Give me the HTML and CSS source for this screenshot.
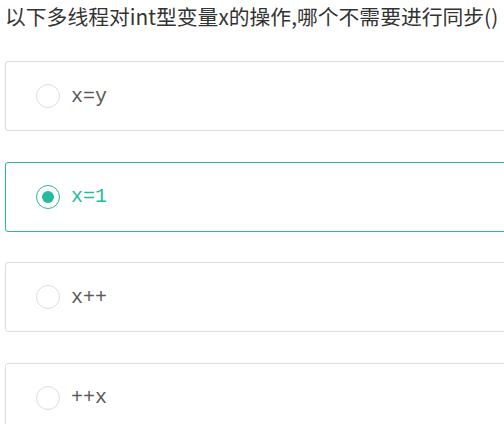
FILE: index.html
```html
<!DOCTYPE html>
<html lang="zh-CN">
<head>
<meta charset="utf-8">
<title>题目</title>
<link rel="stylesheet" href="styles.css">
</head>
<body>
<div class="question">
  <h1 class="title">以下多线程对int型变量x的操作,哪个不需要进行同步()</h1>
  <ul class="options">
    <li class="option"><span class="radio"></span><span class="label">x=y</span></li>
    <li class="option checked"><span class="radio"></span><span class="label">x=1</span></li>
    <li class="option"><span class="radio"></span><span class="label">x++</span></li>
    <li class="option"><span class="radio"></span><span class="label">++x</span></li>
  </ul>
</div>
</body>
</html>
```
FILE: styles.css
```css
html, body {
  margin: 0;
  padding: 0;
  background: #fff;
  overflow: hidden;
}
.question {
  padding-left: 5px;
  width: 560px;
}
.title {
  margin: 0;
  padding-top: 1px;
  font-family: "Noto Sans CJK SC", "Liberation Sans", sans-serif;
  font-weight: normal;
  font-size: 20.8px;
  line-height: 30px;
  color: #333;
  white-space: nowrap;
}
.options {
  list-style: none;
  margin: 30px 0 0;
  padding: 0;
  display: flex;
  flex-direction: column;
  gap: 30.5px;
}
.option {
  box-sizing: border-box;
  height: 70px;
  border: 1px solid #dcdcdc;
  border-radius: 3px;
  padding-left: 30px;
  display: flex;
  align-items: center;
  gap: 11px;
}
.radio {
  box-sizing: border-box;
  width: 24px;
  height: 24px;
  border: 1px solid #dddddd;
  border-radius: 50%;
  display: flex;
  align-items: center;
  justify-content: center;
}
.label {
  font-family: "Courier New", "Liberation Mono", monospace;
  font-size: 20px;
  color: #5a5a5a;
}
.option.checked {
  border-color: #25bb9b;
}
.option.checked .radio {
  border-color: #25bb9b;
}
.option.checked .radio::after {
  content: "";
  width: 12px;
  height: 12px;
  border-radius: 50%;
  background: #25bb9b;
}
.option.checked .label {
  color: #25bb9b;
}
```
